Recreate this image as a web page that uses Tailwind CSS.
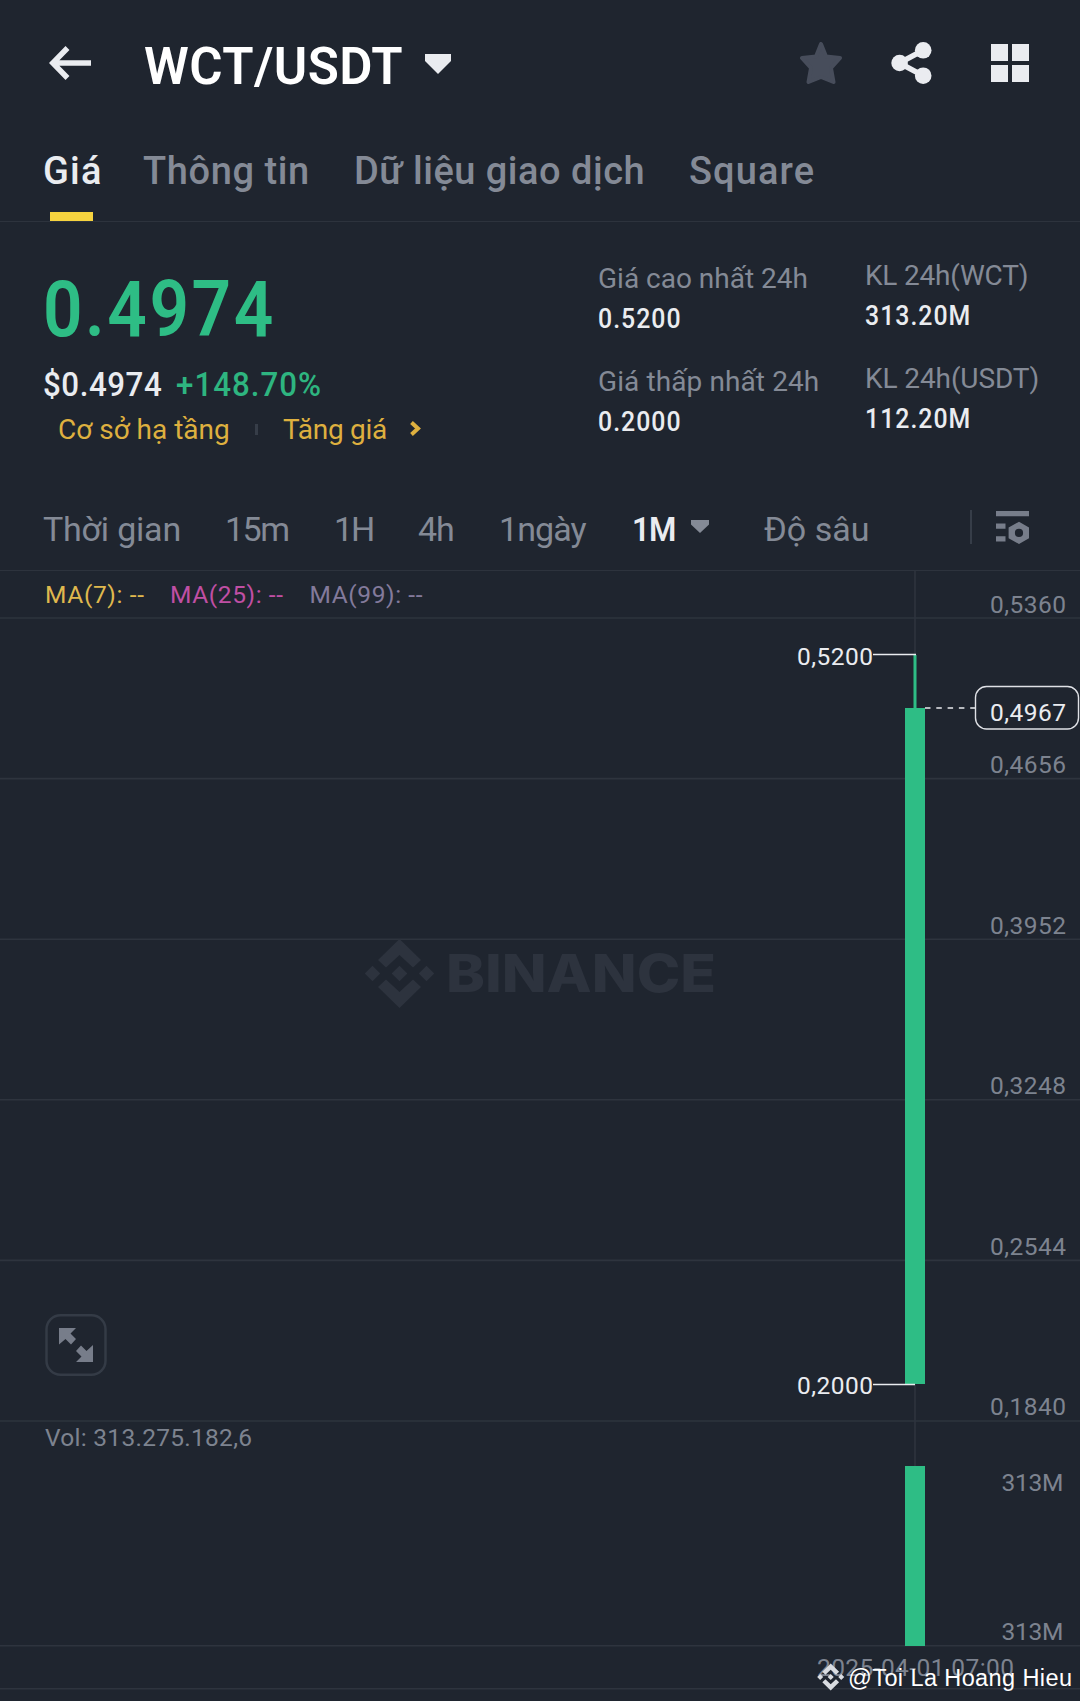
<!DOCTYPE html>
<html lang="vi">
<head>
    <meta charset="UTF-8">
    <meta name="viewport" content="width=device-width, initial-scale=1.0">
    <title>WCT/USDT</title>
    <script src="https://cdn.jsdelivr.net/npm/@tailwindcss/browser@4"></script>
</head>
<body class="bg-[#1f252f] font-['Roboto',sans-serif] text-[#848a96]">
    <div class="w-[1080px] h-[1701px] overflow-hidden flex flex-col whitespace-nowrap">
        <!-- Header -->
        <header class="flex items-center h-[126px] pl-[49px] pr-[51px] shrink-0">
            <svg class="w-[42px] h-[34px] mr-[53px]" viewBox="0 0 42 34" fill="none" stroke="#eaecf0" stroke-width="5.5">
                <path d="M3 17H42M18.5 2L3.8 17L18.5 32"/>
            </svg>
            <h1 class="text-white text-[51px] font-semibold tracking-[0.4px] leading-none pt-[6px]">WCT/USDT</h1>
            <svg class="w-[26px] h-[20px] ml-[22px] mt-[2px]" viewBox="0 0 26 20" fill="#eaecf0">
                <path d="M0 0H26V7L13 20L0 7Z"/>
            </svg>
            <div class="ml-auto flex items-center">
                <svg class="w-[42px] h-[42px]" viewBox="0 0 42 42" fill="#474d5b" stroke="#474d5b" stroke-width="4" stroke-linejoin="round">
                    <path d="M21 2L26 14.5L40 16L31 26L33.5 40L21 35L8.5 40L11 26L2 16L16 14.5Z"/>
                </svg>
                <svg class="w-[41px] h-[42px] ml-[49px]" viewBox="0 0 41 42" fill="#eaecf0">
                    <path d="M32 8.3L8.3 21L32 33.7" fill="none" stroke="#eaecf0" stroke-width="5.5"/>
                    <circle cx="32.2" cy="8.3" r="8.3"/>
                    <circle cx="8.6" cy="21" r="8.3"/>
                    <circle cx="32.2" cy="33.7" r="8.3"/>
                </svg>
                <svg class="w-[38px] h-[38px] ml-[59px]" viewBox="0 0 38 38" fill="#eaecf0">
                    <path d="M0 0H17V17H0ZM21 0H38V17H21ZM0 21H17V38H0ZM21 21H38V38H21Z"/>
                </svg>
            </div>
        </header>

        <!-- Tabs -->
        <nav class="grid grid-cols-[100px_211px_335px_auto] h-[96px] pl-[43px] border-b border-[#2d333d] text-[38px] leading-[91px] font-medium shrink-0">
            <div class="relative text-[#eaecf0] tracking-[1.2px]">Giá
                <span class="absolute left-[7px] bottom-0 w-[43px] h-[9px] bg-[#f6d33f]"></span>
            </div>
            <div class="tracking-[0.6px]">Thông tin</div>
            <div class="tracking-[0.5px]">Dữ liệu giao dịch</div>
            <div class="tracking-[1.1px]">Square</div>
        </nav>

        <!-- Price and 24h stats -->
        <section class="grid grid-cols-[555px_267px_auto] h-[266px] pl-[43px] shrink-0">
            <div class="pt-[44px]">
                <div class="origin-left scale-x-90 text-[#2ebd85] text-[77px] leading-[88px] font-semibold tracking-[2.8px]">0.4974</div>
                <div class="flex items-center h-[61px] text-[34px] font-medium">
                    <div class="w-[133px]">
                        <div class="origin-left scale-x-92 text-[#eaecf0] tracking-[0.6px]">$0.4974</div>
                    </div>
                    <div class="origin-left scale-x-92 text-[#2eb580] tracking-[1.1px]">+148.70%</div>
                </div>
                <div class="flex items-center h-[29px] pl-[15px] text-[28px] text-[#deb03f]">
                    <span class="w-[197px]">Cơ sở hạ tầng</span>
                    <span class="w-[3px] h-[11px] bg-[#363d48]"></span>
                    <span class="w-[152px] pl-[25px] tracking-[-0.3px]">Tăng giá</span>
                    <svg class="w-[12px] h-[15px] mb-[2px]" viewBox="0 0 12 15" fill="none" stroke="#deb03f" stroke-width="4">
                        <path d="M1.5 1.5L8 7.5L1.5 13.5"/>
                    </svg>
                </div>
            </div>
            <div class="pt-[37px] text-[28px] leading-[40px]">
                <div>Giá cao nhất 24h</div>
                <div class="origin-left scale-x-92 text-[#eaecf0] text-[27px] font-medium tracking-[1.1px]">0.5200</div>
                <div class="mt-[23px] tracking-[0.1px]">Giá thấp nhất 24h</div>
                <div class="origin-left scale-x-92 text-[#eaecf0] text-[27px] font-medium tracking-[1.1px]">0.2000</div>
            </div>
            <div class="pt-[34px] text-[28px] leading-[40px]">
                <div class="tracking-[-0.2px]">KL 24h(WCT)</div>
                <div class="origin-left scale-x-92 text-[#eaecf0] text-[27px] font-medium tracking-[1.1px]">313.20M</div>
                <div class="mt-[23px] tracking-[-0.1px]">KL 24h(USDT)</div>
                <div class="origin-left scale-x-92 text-[#eaecf0] text-[27px] font-medium tracking-[1.1px]">112.20M</div>
            </div>
        </section>

        <!-- Timeframes -->
        <div class="grid grid-cols-[182px_109px_84px_81px_133px_59px_73px_206px_26px_auto] items-center h-[83px] pl-[43px] border-b border-[#2d333d] text-[34px] shrink-0">
            <span class="tracking-[-0.2px]">Thời gian</span>
            <span class="tracking-[-1.5px]">15m</span>
            <span class="tracking-[-2px]">1H</span>
            <span class="tracking-[-1px]">4h</span>
            <span class="tracking-[-0.9px]">1ngày</span>
            <div class="origin-left scale-x-92 text-[#eaecf0] font-semibold tracking-[-1px]">1M</div>
            <svg class="w-[18px] h-[13px] mb-[6px]" viewBox="0 0 18 13" fill="#848a96"><path d="M0 0H18V4.5L9 13L0 4.5Z"/></svg>
            <span>Độ sâu</span>
            <span class="w-[2px] h-[34px] mb-[4px] bg-[#363d48]"></span>
            <svg class="w-[33px] h-[33px] mb-[3px]" viewBox="0 0 33 33" fill="#777d8a">
                <path d="M0 0H33V5.2H0ZM0 12.5H9.5V17.7H0ZM0 25.2H9.5V30.5H0Z"/>
                <path fill-rule="evenodd" d="M23 10.8L33 16.5V27.2L23 33L12.6 27.2V16.5ZM23 17.8A4.1 4.1 0 1 0 23 26A4.1 4.1 0 1 0 23 17.8Z"/>
            </svg>
        </div>

        <!-- Chart, 1px = 1 unit -->
        <svg class="w-[1080px] h-[1130px] shrink-0" viewBox="0 571 1080 1130" font-size="24.5" fill="#7d838f">
            <defs>
                <g id="logo">
                    <path d="M0 -34.5L21.5 -13.5L13.5 -6L0 -18.5L-13.5 -6L-21.5 -13.5ZM0 34.5L21.5 13.5L13.5 6L0 18.5L-13.5 6L-21.5 13.500Z"/>
                    <path d="M-34.7 0L-27 -7.800L-19.300 0L-27 7.800ZM34.700 0L27 -7.800L19.300 0L27 7.800ZM0 -7.800L7.800 0L0 7.800L-7.800 0Z"/>
                </g>
            </defs>
            <path d="M0 618H1080M0 778.6H1080M0 939.2H1080M0 1099.8H1080M0 1260.4H1080M0 1421H1080M0 1645.7H1080M0 1688.7H1080M915 571V1646" stroke="#2e343e" stroke-width="1.6"/>

            <g fill="#2d333e">
                <use href="#logo" x="399.5" y="973.5"/>
                <text x="446" y="992" font-family="Inter, sans-serif" font-weight="800" font-size="52" textLength="270" lengthAdjust="spacingAndGlyphs">BINANCE</text>
            </g>

            <text x="45" y="603" fill="#dfb84e" textLength="99">MA(7): --</text>
            <text x="170" y="603" fill="#c04fa4" textLength="113">MA(25): --</text>
            <text x="309.5" y="603" fill="#837a9b" textLength="113">MA(99): --</text>

            <g text-anchor="end">
                <text x="1066" y="612.5" textLength="76">0,5360</text>
                <text x="1066" y="772.5" textLength="76">0,4656</text>
                <text x="1066" y="933.5" textLength="76">0,3952</text>
                <text x="1066" y="1093.5" textLength="76">0,3248</text>
                <text x="1066" y="1254.5" textLength="76">0,2544</text>
                <text x="1066" y="1414.5" textLength="76">0,1840</text>
                <text x="1063.5" y="1490.5" textLength="62">313M</text>
                <text x="1063.5" y="1639.5" textLength="62">313M</text>
            </g>

            <!-- Candle and volume bar -->
            <rect x="913.5" y="655" width="3" height="55" fill="#2ebd85"/>
            <rect x="905" y="708" width="20" height="676" fill="#2ebd85"/>
            <rect x="905" y="1466" width="20" height="180" fill="#2ebd85"/>
            <path d="M873 654.5H916M873 1384.5H915" stroke="#eaecf0" stroke-width="1.6"/>
            <text x="797" y="664.5" fill="#eaecf0" textLength="76">0,5200</text>
            <text x="797" y="1393.5" fill="#eaecf0" textLength="76">0,2000</text>
            <path d="M925 708H975" stroke="#eaecf0" stroke-width="1.6" stroke-dasharray="5.5 5.8"/>
            <rect x="975.5" y="686.5" width="103" height="42.5" rx="11" fill="#1f252f" stroke="#dfe1e6" stroke-width="1.4"/>
            <text x="990" y="720.5" fill="#eaecf0" textLength="76">0,4967</text>

            <!-- Expand button -->
            <rect x="46.5" y="1315.2" width="59" height="59.5" rx="14" fill="none" stroke="#343b46" stroke-width="2.5"/>
            <path d="M59 1328H76L70.5 1333.5L76 1339L71 1344.5L65.5 1339L59 1344.500ZM93 1362H76L81.500 1356.500L76 1351L81 1345.500L86.500 1351L93 1345Z" fill="#777d8a"/>
            <text x="45" y="1446" textLength="207">Vol: 313.275.182,6</text>

            <text x="817" y="1676" textLength="197">2025-04-01 07:00</text>
            <use href="#logo" transform="translate(830.7 1677) scale(.39)" fill="#d9dce1"/>
            <text x="848" y="1685.5" fill="#ffffff" font-family="'Liberation Sans', Arial, sans-serif" font-size="23.5" textLength="224">@Toi La Hoang Hieu</text>
        </svg>
    </div>
</body>
</html>
